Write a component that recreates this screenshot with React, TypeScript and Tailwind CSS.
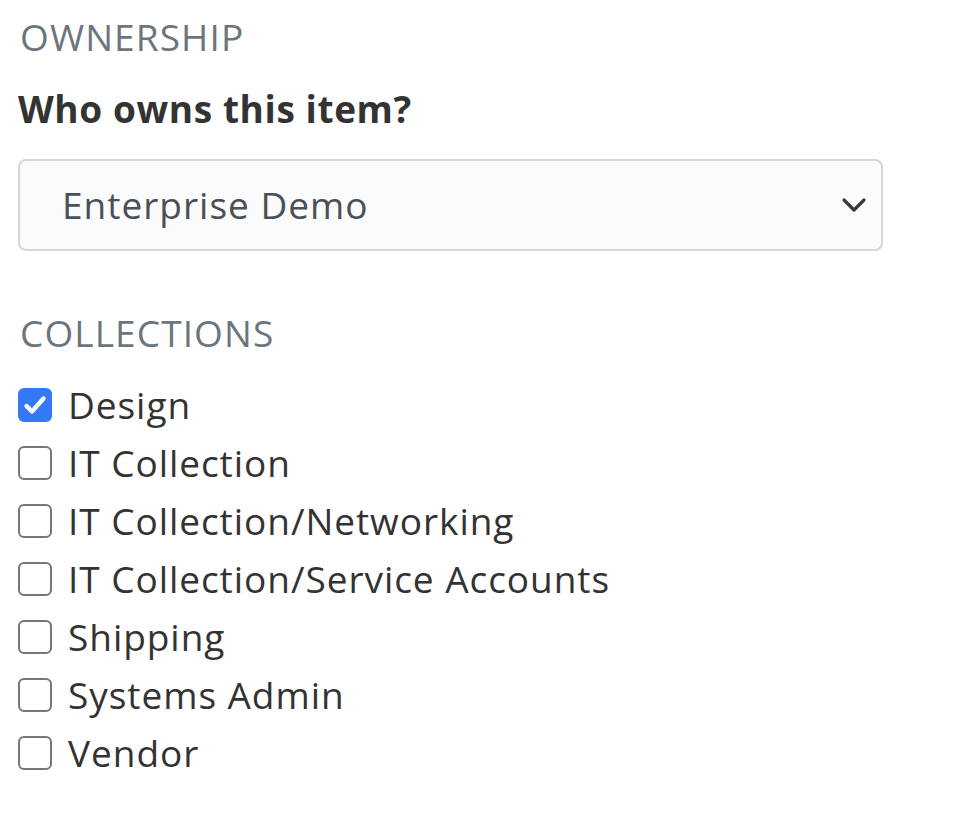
const collections: { label: string; checked: boolean }[] = [
  { label: 'Design', checked: true },
  { label: 'IT Collection', checked: false },
  { label: 'IT Collection/Networking', checked: false },
  { label: 'IT Collection/Service Accounts', checked: false },
  { label: 'Shipping', checked: false },
  { label: 'Systems Admin', checked: false },
  { label: 'Vendor', checked: false },
]

function ChevronDown() {
  return (
    <svg className="w-[26px] h-[16px] shrink-0" viewBox="0 0 26 16" fill="none">
      <path d="M3 3l10 10 10-10" stroke="#343a40" strokeWidth={3.2} strokeLinecap="round" strokeLinejoin="round" />
    </svg>
  )
}

function Checkbox({ checked }: { checked: boolean }) {
  if (checked) {
    return (
      <span className="w-[34px] h-[34px] rounded-[6px] bg-[#3478f6] shrink-0">
        <svg className="w-[34px] h-[34px]" viewBox="0 0 34 34" fill="none">
          <path d="M8.5 18l5.5 5.5L25.5 10.5" stroke="white" strokeWidth={4.4} strokeLinecap="round" strokeLinejoin="round" />
        </svg>
      </span>
    )
  }
  return <span className="w-[34px] h-[34px] rounded-[6px] border-[2.5px] border-[#767676] bg-white shrink-0" />
}

export default function App() {
  return (
    <div
      className="min-h-[826px] bg-white pl-[18px] pt-[10px] text-[#333]"
      style={{ fontFamily: '"Open Sans", "Noto Sans", sans-serif' }}
    >
      <div className="text-[37px] leading-[54px] tracking-[1.1px] text-[#6c757d] pl-[2px]">OWNERSHIP</div>

      <label className="block mt-[18px] text-[37px] leading-[54px] tracking-[0.6px] font-bold text-[#333]">
        Who owns this item?
      </label>

      <div className="mt-[23px] w-[865px] h-[92px] rounded-[8px] border-2 border-[#d3d6da] bg-[#fbfbfb] flex items-center pl-[42px] pr-[14px]">
        <span className="flex-1 text-[37px] leading-[54px] tracking-[1px] text-[#495057]">Enterprise Demo</span>
        <ChevronDown />
      </div>

      <div className="mt-[55px] text-[37px] leading-[54px] tracking-[1.1px] text-[#6c757d] pl-[2px]">COLLECTIONS</div>

      <div className="mt-[16px] flex flex-col">
        {collections.map(c => (
          <label key={c.label} className="flex items-center gap-[16px] h-[58px]">
            <Checkbox checked={c.checked} />
            <span className="text-[37px] leading-[58px] tracking-[0.95px] text-[#333]">{c.label}</span>
          </label>
        ))}
      </div>
    </div>
  )
}
